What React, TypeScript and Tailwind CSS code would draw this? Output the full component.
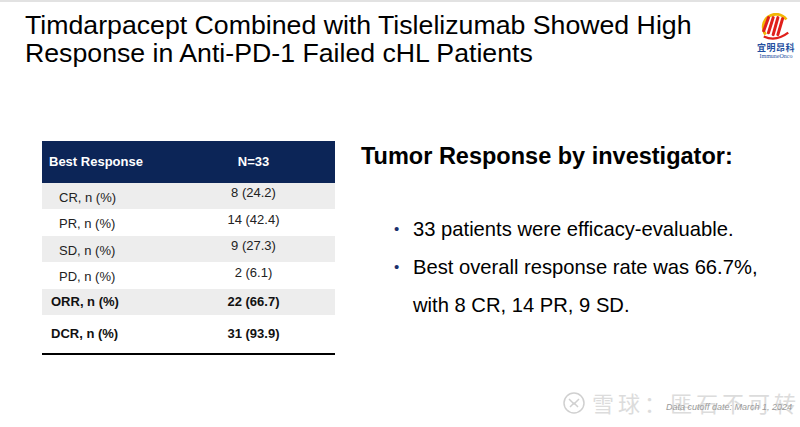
import React from 'react';

const rows = [
  { label: 'CR, n (%)', value: '8 (24.2)', shade: true },
  { label: 'PR, n (%)', value: '14 (42.4)', shade: false },
  { label: 'SD, n (%)', value: '9 (27.3)', shade: true },
  { label: 'PD, n (%)', value: '2 (6.1)', shade: false },
];

function Logo() {
  return (
    <div className="flex flex-col items-center w-[40px] pt-[2px]">
      <svg width="32" height="30" viewBox="0 0 34 30">
        <path d="M6 22 A13 13 0 0 1 28 6" fill="none" stroke="#f2b705" strokeWidth="3" />
        <path d="M9 4 L4 18 M14 4 L9 20 M19 4 L14 22 M24 5 L19 22" stroke="#e0201b" strokeWidth="3.2" strokeLinecap="round" />
        <path d="M4 24 Q17 30 30 20" fill="none" stroke="#e0201b" strokeWidth="2.4" />
      </svg>
      <div className="text-[9px] leading-[10px] font-bold text-[#1f4fa0] font-['Noto_Sans_CJK_SC',sans-serif] tracking-[0.5px]">宜明昂科</div>
      <div className="text-[6px] leading-[7px] text-[#1f4fa0] font-['Liberation_Serif',serif]">ImmuneOnco</div>
    </div>
  );
}

export default function App() {
  return (
    <div className="w-[800px] h-[427px] bg-white relative overflow-hidden font-['Liberation_Sans',Arial,sans-serif] border-t-2 border-[#e2e2e2]">
      <div className="flex justify-between pl-[25px] pr-[4px] pt-[9px]">
        <h1 className="text-[26.7px] leading-[28px] text-black">
          Timdarpacept Combined with Tislelizumab Showed High
          <br />
          Response in Anti-PD-1 Failed cHL Patients
        </h1>
        <Logo />
      </div>

      <div className="flex mt-[74px] pl-[42px]">
        <table className="w-[293px] h-[214px] border-collapse text-[13px] border-b-2 border-black">
          <thead>
            <tr className="bg-[#0c2557] text-white h-[42px]">
              <th className="text-left font-bold pl-[7px] w-[150px]">Best Response</th>
              <th className="font-bold text-center pr-[20px]">N=33</th>
            </tr>
          </thead>
          <tbody>
            {rows.map((r) => (
              <tr key={r.label} className={(r.shade ? 'bg-[#ededed] ' : '') + 'h-[26px] text-[#222]'}>
                <td className="pl-[17px] pt-[3px] align-middle">{r.label}</td>
                <td className="text-center pr-[20px] pb-[6px] align-middle">{r.value}</td>
              </tr>
            ))}
            <tr className="bg-[#ededed] h-[26px] font-bold text-[#111]">
              <td className="pl-[9px] align-middle">ORR, n (%)</td>
              <td className="text-center pr-[20px] align-middle">22 (66.7)</td>
            </tr>
            <tr className="h-[38px] font-bold text-[#111]">
              <td className="pl-[9px] align-middle">DCR, n (%)</td>
              <td className="text-center pr-[20px] align-middle">31 (93.9)</td>
            </tr>
          </tbody>
        </table>

        <div className="ml-[26px]">
          <div className="text-[23.5px] font-bold text-black leading-[30px]">Tumor Response by investigator:</div>
          <ul className="mt-[39px] text-[20.2px] text-black leading-[38px]">
            <li className="flex">
              <span className="w-[52px] pl-[33px] text-[#1a2f6b] text-[15px]">•</span>
              <span>33 patients were efficacy-evaluable.</span>
            </li>
            <li className="flex">
              <span className="w-[52px] pl-[33px] text-[#1a2f6b] text-[15px]">•</span>
              <span>
                Best overall response rate was 66.7%,
                <br />
                with 8 CR, 14 PR, 9 SD.
              </span>
            </li>
          </ul>
        </div>
      </div>

      <div className="absolute left-[562px] top-[384px] flex items-center gap-[6px] text-[#dcdcdc]">
        <svg width="24" height="24" viewBox="0 0 24 24">
          <circle cx="12" cy="12" r="10" fill="none" stroke="#d0d0d0" strokeWidth="1.5" />
          <path d="M7 8 L12 13 L17 8 M8 16 L12 12 L16 16" fill="none" stroke="#d0d0d0" strokeWidth="1.5" />
        </svg>
        <span className="text-[22px] font-['Noto_Sans_CJK_SC',sans-serif] tracking-[4px]">雪球：匪石不可转</span>
      </div>
      <div className="absolute right-[8px] top-[399px] text-[9px] italic text-[#9a9a9a]">Data cutoff date: March 1, 2024</div>
    </div>
  );
}
